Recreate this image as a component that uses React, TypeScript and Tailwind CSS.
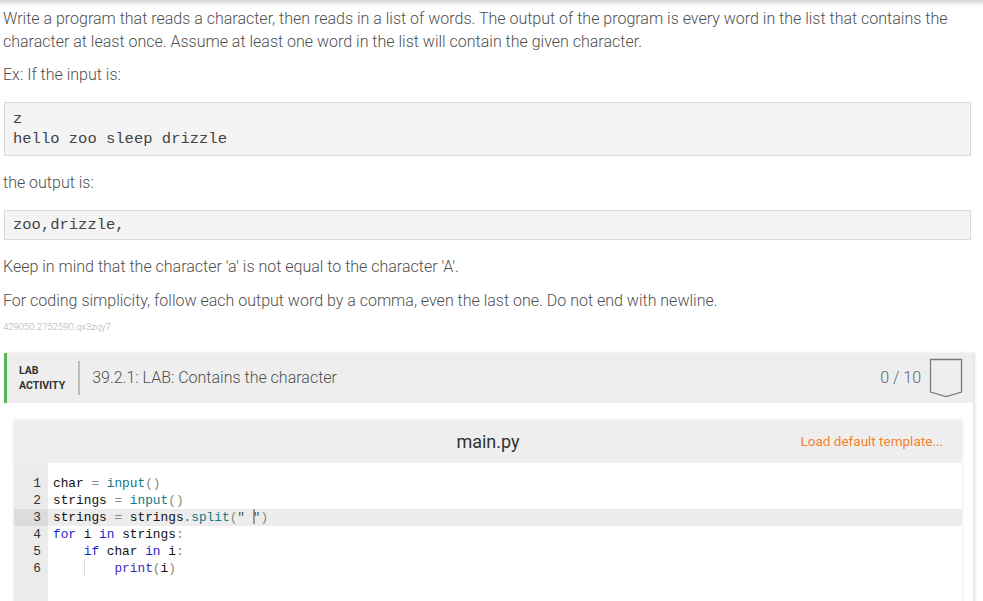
import React from "react";

type Tok = [string, string];

const C = {
  id: "text-[#111]",
  op: "text-[#8a8a8a]",
  fn: "text-[#0e7a86]",
  pa: "text-[#8c8c70]",
  kw: "text-[#1f1fd0]",
  pr: "text-[#4428b8]",
  st: "text-[#555]",
};

const lines: Tok[][] = [
  [["char", C.id], [" = ", C.op], ["input", C.fn], ["()", C.pa]],
  [["strings", C.id], [" = ", C.op], ["input", C.fn], ["()", C.pa]],
  [["strings", C.id], [" = ", C.op], ["strings", C.id], [".split", C.fn], ["(", C.pa], ["\" ", C.st], ["|", ""], ["\"", C.st], [")", C.pa]],
  [["for", C.kw], [" i ", C.id], ["in", C.kw], [" strings", C.id], [":", C.op]],
  [["    ", ""], ["if", C.kw], [" char ", C.id], ["in", C.kw], [" i", C.id], [":", C.op]],
  [["    ", ""], ["~", ""], ["print", C.pr], ["(", C.pa], ["i", C.id], [")", C.pa]],
];

function CodeLine({ toks }: { toks: Tok[] }) {
  return (
    <span>
      {toks.map(([t, cls], i) => {
        if (t === "|") return <span key={i} className="inline-block h-[15px] align-[-3px] border-l-2 border-[#999] -mr-[2px]" />;
        if (t === "~")
          return (
            <span key={i} className="relative">
              <span className="absolute left-0 top-[-2px] h-[17px] border-l border-[#dcdcdc]" />
              {"    "}
            </span>
          );
        return (
          <span key={i} className={cls}>
            {t}
          </span>
        );
      })}
    </span>
  );
}

function Badge() {
  return (
    <svg width="34" height="40" viewBox="0 0 34 40">
      <path d="M1.5 1.5 H32.5 V34 L17 38.5 L1.5 34 Z" fill="none" stroke="#7a7a7a" strokeWidth="1.3" />
    </svg>
  );
}

export default function App() {
  return (
    <div className="relative h-[601px] w-[983px] overflow-hidden bg-white font-['Roboto',sans-serif] font-light text-[#4f4f4f]">
      <div className="h-[6px] bg-gradient-to-b from-[#d4d4d4] to-white" />
      <div className="pl-[3px] pr-[12px]">
        <p className="mt-[1px] text-[16px] leading-[23px]">
          Write a program that reads a character, then reads in a list of words. The output of the program is every word in the list that contains the character at least once. Assume at least one word in the list will contain the given character.
        </p>
        <p className="mt-[10px] text-[16px] leading-[23px]">Ex: If the input is:</p>
        <pre className="mt-[16px] ml-[1px] border border-[#dadada] bg-[#f4f4f4] px-[8px] py-[6px] font-['Liberation_Mono',monospace] text-[15.5px] font-normal leading-[20px] text-[#444]">
          {"z\nhello zoo sleep drizzle"}
        </pre>
        <p className="mt-[15px] text-[16px] leading-[23px]">the output is:</p>
        <pre className="mt-[16px] ml-[1px] border border-[#dadada] bg-[#f4f4f4] px-[8px] py-[4px] font-['Liberation_Mono',monospace] text-[15.5px] font-normal leading-[20px] text-[#444]">
          {"zoo,drizzle,"}
        </pre>
        <p className="mt-[15px] text-[16px] leading-[23px]">Keep in mind that the character 'a' is not equal to the character 'A'.</p>
        <p className="mt-[11px] text-[16px] leading-[23px]">For coding simplicity, follow each output word by a comma, even the last one. Do not end with newline.</p>
        <p className="mt-[8px] text-[9.5px] leading-[14px] text-[#b0b0b0]">429050.2752590.qx3zqy7</p>
      </div>

      <div className="ml-[4px] mt-[19px] w-[969px] bg-white shadow-[2px_0_3px_rgba(0,0,0,0.12)]">
        <div className="flex h-[50px] items-center border-l-[3px] border-[#55b755] bg-[#eeeeee] pr-[10px]">
          <div className="pl-[12px] pr-[13px] text-[10.5px] font-bold leading-[15px] text-[#333]">
            <div>LAB</div>
            <div>ACTIVITY</div>
          </div>
          <div className="h-[34px] w-[2px] bg-[#bdbdbd]" />
          <div className="ml-[12px] text-[16px] text-[#4f4f4f]">39.2.1: LAB: Contains the character</div>
          <div className="ml-auto mr-[8px] text-[16px] text-[#5b6070]">0 / 10</div>
          <Badge />
        </div>

        <div className="px-[10px] pt-[17px] pr-[11px]">
          <div className="h-[200px] bg-white shadow-[0_0_3px_rgba(0,0,0,0.12)]">
            <div className="relative flex h-[43px] items-center justify-center bg-[#eeeeee]">
              <span className="text-[18px] font-normal text-[#333]">main.py</span>
              <span className="absolute right-[19px] text-[13.5px] font-normal text-[#f5822a]">Load default template...</span>
            </div>
            <div className="flex h-[157px] font-['Liberation_Mono',monospace] text-[12.8px] leading-[17px]">
              <div className="w-[34px] bg-[#ebebeb] pt-[12px] text-right text-[#333]">
                {lines.map((_, i) => (
                  <div key={i} className={i === 2 ? "bg-[#dcdcdc] pr-[7px]" : "pr-[7px]"}>
                    {i + 1}
                  </div>
                ))}
              </div>
              <div className="flex-1 pt-[12px]">
                {lines.map((l, i) => (
                  <div key={i} className={i === 2 ? "whitespace-pre bg-[#ececec] pl-[5px]" : "whitespace-pre pl-[5px]"}>
                    <CodeLine toks={l} />
                  </div>
                ))}
              </div>
            </div>
          </div>
        </div>
      </div>
    </div>
  );
}
